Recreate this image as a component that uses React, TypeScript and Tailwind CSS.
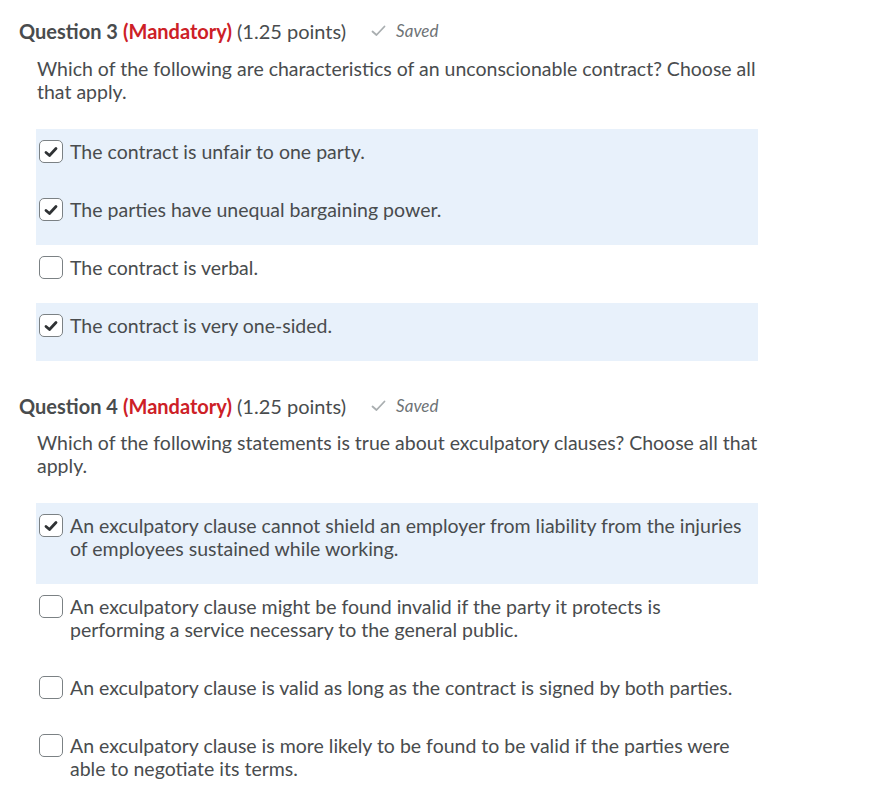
import React from "react";

const Check = () => (
  <svg width="14" height="12" viewBox="0 0 14 12" fill="none">
    <path d="M2 6.5 L5.5 9.5 L12 2.5" stroke="#2f3234" strokeWidth="2.8" strokeLinecap="round" strokeLinejoin="round" />
  </svg>
);

const Box = ({ checked }: { checked: boolean }) => (
  <div className="w-[24px] h-[23px] shrink-0 rounded-[5px] border border-[#7b8184] bg-white flex items-center justify-center">
    {checked && <Check />}
  </div>
);

const Option = ({ text, checked }: { text: React.ReactNode; checked: boolean }) => (
  <div className={`flex gap-[7px] pl-[3px] pr-[12px] pt-[11px] pb-[24px] ${checked ? "bg-[#e8f1fb]" : "bg-white"}`}>
    <Box checked={checked} />
    <div className="leading-[23px] text-[19.5px]">{text}</div>
  </div>
);

const Header = ({ n }: { n: number }) => (
  <div className="flex items-center h-[24px] pl-[19px]">
    <div className="text-[20px] text-[#494c4e]">
      <span className="font-bold">Question {n}</span>{" "}
      <span className="font-bold text-[#cd2026]">(Mandatory)</span>{" "}
      <span>(1.25 points)</span>
    </div>
    <div className="flex items-center ml-[25px] text-[#6e7376] text-[17px] italic">
      <svg width="15" height="12" viewBox="0 0 15 12" fill="none" className="mr-[10px]">
        <path d="M1.5 6.5 L5.5 10 L13.5 1.5" stroke="#a9aeb0" strokeWidth="1.8" strokeLinecap="round" strokeLinejoin="round" />
      </svg>
      Saved
    </div>
  </div>
);

export default function App() {
  return (
    <div className="w-[876px] h-[785px] bg-white overflow-hidden text-[#494c4e]" style={{ fontFamily: "Lato, 'Open Sans', sans-serif" }}>
      <div className="pt-[19px]">
        <Header n={3} />
        <div className="pl-[37px] pr-[110px] mt-[14px] text-[19.5px] leading-[23px]">
          Which of the following are characteristics of an unconscionable contract? Choose all that apply.
        </div>
        <div className="ml-[36px] w-[722px] mt-[26px]">
          <Option checked text="The contract is unfair to one party." />
          <Option checked text="The parties have unequal bargaining power." />
          <Option checked={false} text="The contract is verbal." />
          <Option checked text="The contract is very one-sided." />
        </div>
        <div className="mt-[33px]">
          <Header n={4} />
        </div>
        <div className="pl-[37px] pr-[110px] mt-[13px] text-[19.5px] leading-[23px]">
          Which of the following statements is true about exculpatory clauses? Choose all that apply.
        </div>
        <div className="ml-[36px] w-[722px] mt-[26px]">
          <Option checked text="An exculpatory clause cannot shield an employer from liability from the injuries of employees sustained while working." />
          <Option checked={false} text="An exculpatory clause might be found invalid if the party it protects is performing a service necessary to the general public." />
          <Option checked={false} text="An exculpatory clause is valid as long as the contract is signed by both parties." />
          <Option checked={false} text="An exculpatory clause is more likely to be found to be valid if the parties were able to negotiate its terms." />
        </div>
      </div>
    </div>
  );
}
